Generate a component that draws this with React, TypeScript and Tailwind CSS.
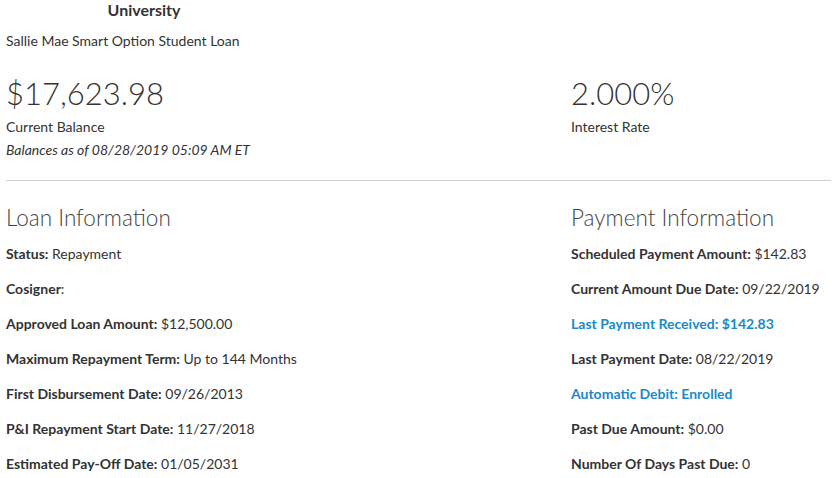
const loanRows: [string, string][] = [
  ["Status:", "Repayment"],
  ["Cosigner", ":"],
  ["Approved Loan Amount:", "$12,500.00"],
  ["Maximum Repayment Term:", "Up to 144 Months"],
  ["First Disbursement Date:", "09/26/2013"],
  ["P&I Repayment Start Date:", "11/27/2018"],
  ["Estimated Pay-Off Date:", "01/05/2031"],
];

const paymentRows: { label: string; value: string; link?: boolean }[] = [
  { label: "Scheduled Payment Amount:", value: "$142.83" },
  { label: "Current Amount Due Date:", value: "09/22/2019" },
  { label: "Last Payment Received:", value: "$142.83", link: true },
  { label: "Last Payment Date:", value: "08/22/2019" },
  { label: "Automatic Debit:", value: "Enrolled", link: true },
  { label: "Past Due Amount:", value: "$0.00" },
  { label: "Number Of Days Past Due:", value: "0" },
];

function Row({ label, value, link }: { label: string; value: string; link?: boolean }) {
  if (link) {
    return (
      <p className="h-[35px] font-bold text-[#1a8ac6]">
        {label} {value}
      </p>
    );
  }
  return (
    <p className="h-[35px]">
      <span className="font-bold">{label}</span>
      {label.endsWith(":") ? " " : ""}
      {value}
    </p>
  );
}

export default function App() {
  return (
    <div className="h-[478px] w-[832px] overflow-hidden bg-white pl-[6px] text-[14px] leading-[18px] text-[#333]" style={{ fontFamily: "Lato, 'Open Sans', sans-serif" }}>
      {/* header */}
      <div className="w-[276px] pt-[1px] text-center text-[16px] font-bold leading-[18px]">University</div>
      <p className="mt-[13px]">Sallie Mae Smart Option Student Loan</p>

      <div className="mt-[24px] grid grid-cols-[565px_1fr]">
        <div>
          <p className="text-[31px] font-light leading-[38px]">$17,623.98</p>
          <p className="mt-[6px]">Current Balance</p>
          <p className="mt-[5px] italic">Balances as of 08/28/2019 05:09 AM ET</p>
        </div>
        <div>
          <p className="text-[31px] font-light leading-[38px]">2.000%</p>
          <p className="mt-[6px]">Interest Rate</p>
        </div>
      </div>

      <hr className="mt-[21px] mr-[1px] border-t border-[#cfcfcf]" />

      <div className="mt-[24px] grid grid-cols-[565px_1fr]">
        <div>
          <h2 className="mb-[14px] text-[22.5px] font-light leading-[26px] text-[#444]">Loan Information</h2>
          {loanRows.map(([l, v]) => (
            <Row key={l} label={l} value={v} />
          ))}
        </div>
        <div>
          <h2 className="mb-[14px] text-[22.5px] font-light leading-[26px] text-[#444]">Payment Information</h2>
          {paymentRows.map((r) => (
            <Row key={r.label} {...r} />
          ))}
        </div>
      </div>
    </div>
  );
}
